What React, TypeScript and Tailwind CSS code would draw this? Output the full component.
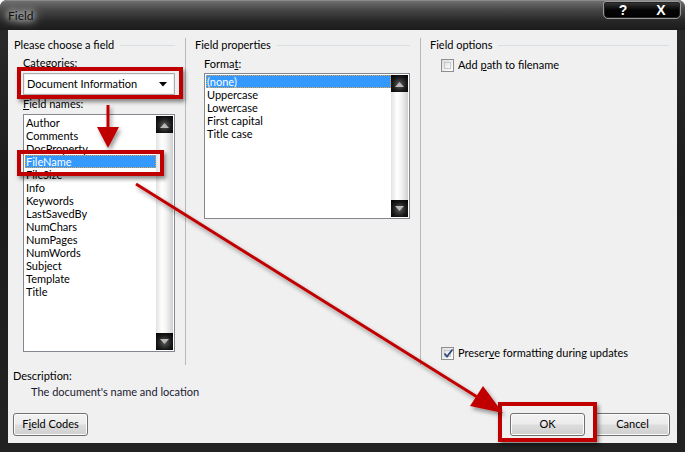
import React from 'react';

const fieldNames = [
  'Author',
  'Comments',
  'DocProperty',
  'FileName',
  'FileSize',
  'Info',
  'Keywords',
  'LastSavedBy',
  'NumChars',
  'NumPages',
  'NumWords',
  'Subject',
  'Template',
  'Title',
];

const formats = ['(none)', 'Uppercase', 'Lowercase', 'First capital', 'Title case'];

const ScrollButton: React.FC<{ down?: boolean }> = ({ down }) => (
  <div className="w-[17px] h-[17px] bg-[radial-gradient(circle_at_50%_55%,#5c5c5c_0%,#1a1a1a_55%,#000_100%)] flex items-center justify-center">
    <svg width="9" height="6" viewBox="0 0 9 6">
      <polygon points={down ? '0,0 9,0 4.5,5' : '0,6 9,6 4.5,1'} fill="#b8b8b8" />
    </svg>
  </div>
);

const ScrollBar: React.FC = () => (
  <div className="w-[17px] flex flex-col bg-[linear-gradient(to_right,#e2e2e2,#ffffff_35%,#f4f4f4_60%,#cfcfcf)]">
    <ScrollButton />
    <div className="flex-1" />
    <ScrollButton down />
  </div>
);

const ListBox: React.FC<{ items: string[]; selected: number; className: string }> = ({ items, selected, className }) => (
  <div className={`border border-[#828790] bg-white p-[1px] flex ${className}`}>
    <div className="flex-1 flex flex-col">
      {items.map((item, i) => (
        <div
          key={item}
          className={`h-[13px] leading-[13px] px-[1px] whitespace-nowrap ${
            i === selected ? 'bg-[#3399ff] text-white outline-1 outline-dotted outline-[#e8a040] -outline-offset-1' : 'text-black'
          }`}
        >
          {item}
        </div>
      ))}
    </div>
    <ScrollBar />
  </div>
);

const GroupTitle: React.FC<{ title: string }> = ({ title }) => (
  <div className="h-[14px] flex items-center gap-[6px]">
    <span className="leading-[14px] whitespace-nowrap">{title}</span>
    <div className="flex-1 h-px bg-[#d5dfe5]" />
  </div>
);

const CheckBox: React.FC<{ checked?: boolean }> = ({ checked }) => (
  <div className="w-[13px] h-[13px] border border-[#8f8f8f] bg-[linear-gradient(135deg,#dcdcdc,#ffffff)] p-[2px]">
    <div className="w-full h-full border border-[#c9c9c9] bg-[linear-gradient(135deg,#e4e4e4,#fafafa)] relative">
      {checked && (
        <svg className="absolute -left-[2px] -top-[3px]" width="11" height="11" viewBox="0 0 11 11">
          <path d="M1.5 5.5 L4 8.5 L9.5 1.5" stroke="#2f4b7c" strokeWidth="1.8" fill="none" />
        </svg>
      )}
    </div>
  </div>
);

const Button: React.FC<{ children: React.ReactNode; className?: string }> = ({ children, className }) => (
  <div
    className={`h-[23px] w-[75px] rounded-[3px] border border-[#707070] bg-[linear-gradient(to_bottom,#f2f2f2_0%,#ebebeb_48%,#dddddd_52%,#cfcfcf_100%)] shadow-[inset_0_0_0_1px_#fcfcfc] flex items-center justify-center text-black ${className ?? ''}`}
  >
    {children}
  </div>
);

const RedBox: React.FC<{ className: string }> = ({ className }) => (
  <div className={`absolute border-[4px] border-[#c00000] shadow-[2px_3px_4px_rgba(0,0,0,0.45)] ${className}`} />
);

export default function App() {
  return (
    <div className="w-[685px] h-[452px] relative overflow-hidden bg-white font-['Lato','Liberation_Sans',sans-serif] text-[11px] text-black">
      <div className="w-full h-full rounded-t-[7px] bg-[linear-gradient(to_bottom,#2c2c2c,#1c1c1c_40%,#222222)] flex flex-col">
        {/* title bar */}
        <div className="h-[30px] flex items-start justify-between rounded-t-[7px] border-t border-[#8a8a8a] bg-[linear-gradient(to_bottom,#6e6e6e_0%,#474747_30%,#262626_70%,#1c1c1c_100%)]">
          <div className="ml-[2px] px-[6px] pt-[6px] pb-[4px] text-[12px] text-[#101010] [text-shadow:0_0_6px_#fff,0_0_10px_#eee,0_0_14px_#ddd]">
            Field
          </div>
          <div className="mr-[4px] w-[78px] h-[18px] rounded-b-[5px] rounded-t-[3px] border border-[#9a9a9a] bg-[linear-gradient(to_bottom,#3a3a3a,#050505_50%,#000)] shadow-[inset_0_0_0_1px_#222] flex items-center text-white font-bold text-[14px] font-['Liberation_Sans',sans-serif]">
            <span className="w-[38px] text-center">?</span>
            <span className="w-[38px] text-center">X</span>
          </div>
        </div>

        {/* client area */}
        <div className="mx-[8px] h-[413px] bg-[#f0f0f0] flex flex-col">
          <div className="mt-[8px] h-[327px] flex">
            {/* column 1 */}
            <div className="w-[177px] pl-[6px] pr-[10px] flex flex-col">
              <GroupTitle title="Please choose a field" />
              <div className="mt-[4px] h-[14px] leading-[14px] pl-[9px]">
                <u>C</u>ategories:
              </div>
              <div className="mt-[3px] ml-[9px] h-[22px] border border-[#acacac] bg-white shadow-[inset_0_0_0_1px_#f0f0f0] flex items-center justify-between pl-[3px] pr-[7px]">
                <span>Document Information</span>
                <svg width="8" height="5" viewBox="0 0 8 5">
                  <polygon points="0,0 8,0 4,4.5" fill="#000" />
                </svg>
              </div>
              <div className="mt-[2px] h-[14px] leading-[14px] pl-[9px]">
                <u>F</u>ield names:
              </div>
              <ListBox items={fieldNames} selected={3} className="mt-[3px] ml-[9px] h-[238px]" />
            </div>
            <div className="w-px bg-[#b9b9b9]" />

            {/* column 2 */}
            <div className="w-[234px] pl-[9px] pr-[10px] flex flex-col">
              <GroupTitle title="Field properties" />
              <div className="mt-[5px] h-[14px] leading-[14px] pl-[9px]">
                Forma<u>t</u>:
              </div>
              <ListBox items={formats} selected={0} className="mt-[2px] ml-[9px] h-[146px]" />
            </div>
            <div className="w-px bg-[#b9b9b9]" />

            {/* column 3 */}
            <div className="flex-1 pl-[9px] pr-[8px] flex flex-col">
              <GroupTitle title="Field options" />
              <div className="mt-[6px] ml-[11px] h-[14px] flex items-center gap-[4px]">
                <CheckBox />
                <span className="leading-[14px]">
                  Add <u>p</u>ath to filename
                </span>
              </div>
              <div className="mt-auto mb-[5px] ml-[11px] h-[14px] flex items-center gap-[4px]">
                <CheckBox checked />
                <span className="leading-[14px]">
                  Preser<u>v</u>e formatting during updates
                </span>
              </div>
            </div>
          </div>

          <div className="mt-[4px] h-[14px] leading-[14px] pl-[5px]">Description:</div>
          <div className="mt-[2px] h-[14px] leading-[14px] pl-[23px] text-[#1a1a30]">
            The document's name and location
          </div>

          <div className="mt-[14px] flex items-center pl-[5px] pr-[7px]">
            <Button>
              F<u>i</u>eld Codes
            </Button>
            <div className="flex-1" />
            <Button>OK</Button>
            <Button className="ml-[10px]">Cancel</Button>
          </div>
        </div>
      </div>

      {/* annotations */}
      <RedBox className="left-[17px] top-[67px] w-[166px] h-[32px]" />
      <RedBox className="left-[17px] top-[150px] w-[147px] h-[26px]" />
      <RedBox className="left-[498px] top-[402px] w-[99px] h-[40px]" />

      <svg className="absolute left-0 top-0 pointer-events-none" width="685" height="452" viewBox="0 0 685 452">
        <defs>
          <filter id="sh" x="-20%" y="-20%" width="140%" height="140%">
            <feDropShadow dx="2" dy="3" stdDeviation="2" floodColor="#000" floodOpacity="0.4" />
          </filter>
        </defs>
        <g filter="url(#sh)" fill="#c00000" stroke="#c00000">
          <line x1="108" y1="105" x2="108" y2="130" strokeWidth="3" />
          <polygon points="97,127 119,127 108,148" stroke="none" />
          <line x1="136" y1="184" x2="482" y2="400" strokeWidth="3" />
          <polygon points="470,406 483,386 503,413" stroke="none" />
        </g>
      </svg>
    </div>
  );
}
